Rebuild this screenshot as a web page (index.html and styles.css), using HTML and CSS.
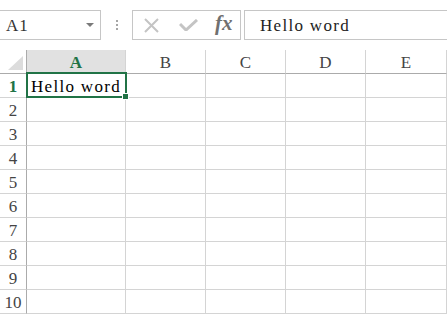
FILE: index.html
```html
<!DOCTYPE html>
<html>
<head>
    <meta charset="UTF-8">
    <title>Sheet</title>
    <link rel="stylesheet" href="styles.css">
</head>
<body>
<div class="toolbar">
    <div class="namebox">
        <span class="name">A1</span>
        <span class="arrow"></span>
    </div>
    <div class="grip"><i></i><i></i><i></i></div>
    <div class="fxbox">
        <svg class="ico" width="17" height="15" viewBox="0 0 17 15">
            <path d="M2 1 L15 14 M15 1 L2 14" stroke="#c4c4c4" stroke-width="2" fill="none"/>
        </svg>
        <svg class="ico" width="19" height="12" viewBox="0 0 19 12">
            <path d="M1 5 L7 11 L18 1" stroke="#c4c4c4" stroke-width="3" fill="none"/>
        </svg>
        <span class="fx">fx</span>
    </div>
    <div class="formula">Hello word</div>
</div>

<div class="sheet">
    <div class="corner"><span class="tri"></span></div>
    <div class="colhdr active">A</div>
    <div class="colhdr">B</div>
    <div class="colhdr">C</div>
    <div class="colhdr">D</div>
    <div class="colhdr">E</div>

    <div class="rowhdr active">1</div>
    <div class="cell a1">Hello word<span class="sel"><span class="handle"></span></span></div>
    <div class="cell"></div><div class="cell"></div><div class="cell"></div><div class="cell"></div>

    <div class="rowhdr">2</div>
    <div class="cell"></div><div class="cell"></div><div class="cell"></div><div class="cell"></div><div class="cell"></div>
    <div class="rowhdr">3</div>
    <div class="cell"></div><div class="cell"></div><div class="cell"></div><div class="cell"></div><div class="cell"></div>
    <div class="rowhdr">4</div>
    <div class="cell"></div><div class="cell"></div><div class="cell"></div><div class="cell"></div><div class="cell"></div>
    <div class="rowhdr">5</div>
    <div class="cell"></div><div class="cell"></div><div class="cell"></div><div class="cell"></div><div class="cell"></div>
    <div class="rowhdr">6</div>
    <div class="cell"></div><div class="cell"></div><div class="cell"></div><div class="cell"></div><div class="cell"></div>
    <div class="rowhdr">7</div>
    <div class="cell"></div><div class="cell"></div><div class="cell"></div><div class="cell"></div><div class="cell"></div>
    <div class="rowhdr">8</div>
    <div class="cell"></div><div class="cell"></div><div class="cell"></div><div class="cell"></div><div class="cell"></div>
    <div class="rowhdr">9</div>
    <div class="cell"></div><div class="cell"></div><div class="cell"></div><div class="cell"></div><div class="cell"></div>
    <div class="rowhdr">10</div>
    <div class="cell"></div><div class="cell"></div><div class="cell"></div><div class="cell"></div><div class="cell"></div>
</div>
</body>
</html>
```

FILE: styles.css
```css
body {
    margin: 0;
    padding: 0;
    background-color: #fff;
    font-family: "Liberation Serif", serif;
    overflow: hidden;
}

.toolbar {
    display: flex;
    align-items: flex-start;
    height: 50px;
    padding-top: 10px;
    box-sizing: border-box;
}

.namebox {
    width: 101px;
    height: 30px;
    box-sizing: border-box;
    border: 1px solid #c6c6c6;
    border-left: none;
    display: flex;
    align-items: center;
    padding-left: 6px;
    position: relative;
}

.name {
    font-family: "Liberation Serif", serif;
    font-size: 17px;
    letter-spacing: 1px;
    color: #333;
    margin-top: 2px;
}

.arrow {
    position: absolute;
    left: 86px;
    top: 12px;
    border-left: 4px solid transparent;
    border-right: 4px solid transparent;
    border-top: 4px solid #7a7a7a;
}

.grip {
    width: 31px;
    height: 30px;
    display: flex;
    flex-direction: column;
    align-items: center;
    justify-content: center;
    gap: 2px;
}

.grip i {
    display: block;
    width: 2px;
    height: 2px;
    background-color: #a6a6a6;
}

.fxbox {
    width: 109px;
    height: 30px;
    box-sizing: border-box;
    border: 1px solid #c6c6c6;
    display: flex;
    align-items: center;
    padding-left: 10px;
    gap: 19px;
}

.fxbox .ico {
    display: block;
}

.fx {
    font-family: "Liberation Serif", serif;
    font-style: italic;
    font-weight: bold;
    font-size: 21px;
    color: #707070;
    margin-left: -2px;
    margin-top: -3px;
}

.formula {
    flex: 1;
    height: 30px;
    margin-left: 3px;
    margin-right: -5px;
    box-sizing: border-box;
    border: 1px solid #c6c6c6;
    padding-left: 15px;
    font-family: "Liberation Serif", serif;
    font-size: 17px;
    letter-spacing: 1.3px;
    line-height: 30px;
    color: #222;
}

.sheet {
    display: grid;
    grid-template-columns: 27px 99px 80px 80px 80px 81px;
    grid-template-rows: 24px repeat(10, 24px);
}

.corner, .colhdr, .rowhdr, .cell {
    box-sizing: border-box;
    border-right: 1px solid #d4d4d4;
    border-bottom: 1px solid #d4d4d4;
}

.corner {
    border-right-color: #ababab;
    border-bottom-color: #ababab;
    position: relative;
}

.tri {
    position: absolute;
    right: 3px;
    bottom: 3px;
    border-left: 15px solid transparent;
    border-bottom: 14px solid #dcdcdc;
}

.colhdr {
    border-bottom-color: #ababab;
    text-align: center;
    font-size: 17px;
    line-height: 26px;
    color: #444;
}

.colhdr.active {
    background-color: #e1e1e1;
    color: #217346;
    font-weight: bold;
}

.rowhdr {
    border-right-color: #ababab;
    text-align: center;
    font-size: 17px;
    line-height: 25px;
    color: #444;
}

.rowhdr.active {
    color: #217346;
    font-weight: bold;
}

.cell {
    font-family: "Liberation Serif", serif;
    font-size: 17px;
    letter-spacing: 1.3px;
    line-height: 25px;
    padding-left: 4px;
    white-space: nowrap;
    color: #000;
}

.a1 {
    position: relative;
}

.sel {
    position: absolute;
    left: -1px;
    top: -2px;
    width: 101px;
    height: 26px;
    box-sizing: border-box;
    border: 2px solid #217346;
}

.handle {
    position: absolute;
    right: -4px;
    bottom: -4px;
    width: 5px;
    height: 5px;
    background-color: #217346;
    border: 1px solid #fff;
}
```
